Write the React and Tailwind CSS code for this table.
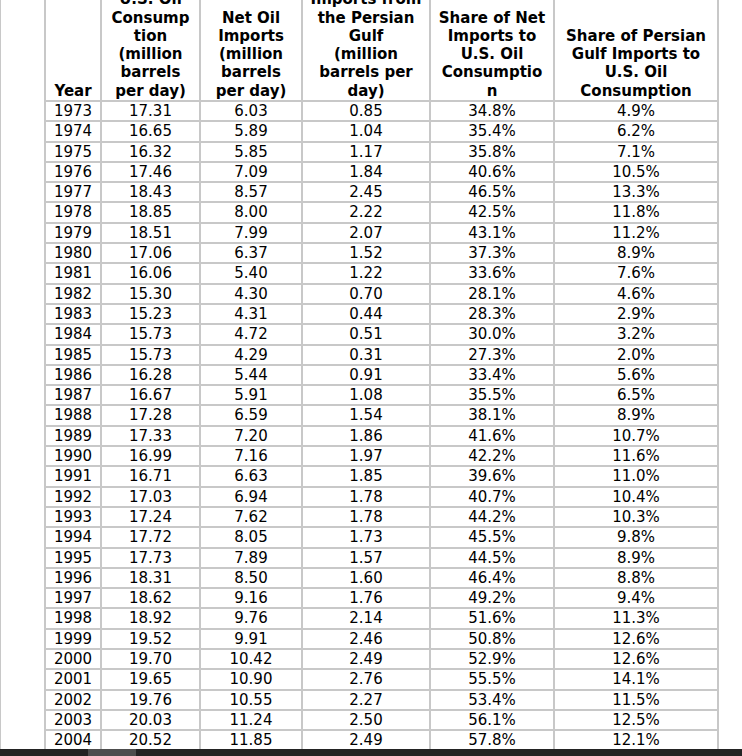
import React from "react";

const rows = [
  ["1973", "17.31", "6.03", "0.85", "34.8%", "4.9%"],
  ["1974", "16.65", "5.89", "1.04", "35.4%", "6.2%"],
  ["1975", "16.32", "5.85", "1.17", "35.8%", "7.1%"],
  ["1976", "17.46", "7.09", "1.84", "40.6%", "10.5%"],
  ["1977", "18.43", "8.57", "2.45", "46.5%", "13.3%"],
  ["1978", "18.85", "8.00", "2.22", "42.5%", "11.8%"],
  ["1979", "18.51", "7.99", "2.07", "43.1%", "11.2%"],
  ["1980", "17.06", "6.37", "1.52", "37.3%", "8.9%"],
  ["1981", "16.06", "5.40", "1.22", "33.6%", "7.6%"],
  ["1982", "15.30", "4.30", "0.70", "28.1%", "4.6%"],
  ["1983", "15.23", "4.31", "0.44", "28.3%", "2.9%"],
  ["1984", "15.73", "4.72", "0.51", "30.0%", "3.2%"],
  ["1985", "15.73", "4.29", "0.31", "27.3%", "2.0%"],
  ["1986", "16.28", "5.44", "0.91", "33.4%", "5.6%"],
  ["1987", "16.67", "5.91", "1.08", "35.5%", "6.5%"],
  ["1988", "17.28", "6.59", "1.54", "38.1%", "8.9%"],
  ["1989", "17.33", "7.20", "1.86", "41.6%", "10.7%"],
  ["1990", "16.99", "7.16", "1.97", "42.2%", "11.6%"],
  ["1991", "16.71", "6.63", "1.85", "39.6%", "11.0%"],
  ["1992", "17.03", "6.94", "1.78", "40.7%", "10.4%"],
  ["1993", "17.24", "7.62", "1.78", "44.2%", "10.3%"],
  ["1994", "17.72", "8.05", "1.73", "45.5%", "9.8%"],
  ["1995", "17.73", "7.89", "1.57", "44.5%", "8.9%"],
  ["1996", "18.31", "8.50", "1.60", "46.4%", "8.8%"],
  ["1997", "18.62", "9.16", "1.76", "49.2%", "9.4%"],
  ["1998", "18.92", "9.76", "2.14", "51.6%", "11.3%"],
  ["1999", "19.52", "9.91", "2.46", "50.8%", "12.6%"],
  ["2000", "19.70", "10.42", "2.49", "52.9%", "12.6%"],
  ["2001", "19.65", "10.90", "2.76", "55.5%", "14.1%"],
  ["2002", "19.76", "10.55", "2.27", "53.4%", "11.5%"],
  ["2003", "20.03", "11.24", "2.50", "56.1%", "12.5%"],
  ["2004", "20.52", "11.85", "2.49", "57.8%", "12.1%"],
];

const headers = [
  ["Year"],
  ["U.S. Oil", "Consump", "tion", "(million", "barrels", "per day)"],
  ["Net Oil", "Imports", "(million", "barrels", "per day)"],
  ["Imports from", "the Persian", "Gulf", "(million", "barrels per", "day)"],
  ["Share of Net", "Imports to", "U.S. Oil", "Consumptio", "n"],
  ["Share of Persian", "Gulf Imports to", "U.S. Oil", "Consumption"],
];

export default function App() {
  return (
    <div className="relative h-[756px] w-[742px] overflow-hidden bg-white font-['DejaVu_Sans',Verdana,sans-serif] text-[15px] leading-[18.3px] text-black">
      <div className="flex items-stretch">
        <div className="w-[44px] shrink-0 border-l border-[#c8c8c8]" />
        <div className="mt-[-11.8px] grid grid-cols-[56px_99px_102px_128px_124px_166px] border-t-2 border-[#c8c8c8]">
          {headers.map((lines, i) => (
            <div
              key={"h" + i}
              className={
                "flex flex-col justify-end border-b-2 border-l-2 border-[#c8c8c8] text-center font-bold" +
                (i === 5 ? " border-r-2" : "")
              }
            >
              {lines.map((l, j) => (
                <span key={j} className="block whitespace-nowrap">
                  {l}
                </span>
              ))}
            </div>
          ))}
          {rows.map((r, ri) =>
            r.map((c, ci) => (
              <div
                key={ri + "-" + ci}
                className={
                  "border-b-2 border-l-2 border-[#c8c8c8] text-center whitespace-nowrap" +
                  (ci === 5 ? " border-r-2" : "")
                }
              >
                {c}
              </div>
            ))
          )}
        </div>
      </div>
      <div className="absolute bottom-0 left-0 right-0 h-[7px] bg-[#232323]">
        <div className="absolute left-[88px] top-0 h-full w-[48px] bg-[#4d4d4d]" />
      </div>
    </div>
  );
}
